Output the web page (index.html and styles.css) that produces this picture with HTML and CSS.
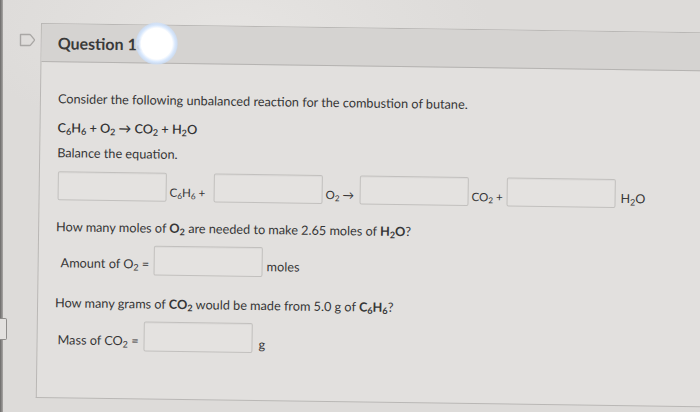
FILE: index.html
```html
<!DOCTYPE html>
<html lang="en">
<head>
<meta charset="utf-8">
<title>Question 18</title>
<link rel="stylesheet" href="styles.css">
</head>
<body>
<div class="page">
  <div class="edge"><div class="tab"></div></div>
  <div class="gutter">
    <svg class="flag" width="17" height="14" viewBox="0 0 17 14" aria-hidden="true">
      <path d="M1.5 1.5 H10.5 Q11.2 1.5 11.7 2.1 L15.2 6.4 Q15.6 7 15.2 7.6 L11.7 11.9 Q11.2 12.5 10.5 12.5 H1.5 Z" fill="none" stroke="#a9a7a5" stroke-width="1.4" stroke-linejoin="round"/>
    </svg>
  </div>
  <div class="card">
    <div class="card-head">
      <h2 class="title">Question 18</h2>
      <div class="glare"></div>
    </div>
    <div class="card-body">
      <p class="line l1">Consider the following unbalanced reaction for the combustion of butane.</p>
      <p class="line eq">C<sub>6</sub>H<sub>6</sub> + O<sub>2</sub> → CO<sub>2</sub> + H<sub>2</sub>O</p>
      <p class="line l3">Balance the equation.</p>
      <div class="eq-row">
        <div class="box"></div>
        <span class="term t1">C<sub>6</sub>H<sub>6</sub> +</span>
        <div class="box"></div>
        <span class="term t2">O<sub>2</sub> →</span>
        <div class="box"></div>
        <span class="term t3">CO<sub>2</sub> +</span>
        <div class="box"></div>
        <span class="term t4">H<sub>2</sub>O</span>
      </div>
      <p class="line q1">How many moles of <b>O<sub>2</sub></b> are needed to make 2.65 moles of <b>H<sub>2</sub>O</b>?</p>
      <div class="ans-row a1">
        <span class="ans-label">Amount of O<sub>2</sub> =</span>
        <div class="box box-ans"></div>
        <span class="unit">moles</span>
      </div>
      <p class="line q2">How many grams of <b>CO<sub>2</sub></b> would be made from 5.0 g of <b>C<sub>6</sub>H<sub>6</sub></b>?</p>
      <div class="ans-row a2">
        <span class="ans-label">Mass of CO<sub>2</sub> =</span>
        <div class="box box-ans"></div>
        <span class="unit unit-g">g</span>
      </div>
    </div>
  </div>
</div>
</body>
</html>
```

FILE: styles.css
```css
* { box-sizing: border-box; }
html, body { margin: 0; padding: 0; }
body {
  width: 700px;
  height: 412px;
  overflow: hidden;
  font-family: Lato, "Open Sans", "Liberation Sans", sans-serif;
  color: #363636;
  background: radial-gradient(ellipse 260px 120px at 230px 30px, #e6e4e2 0%, #dddbd9 100%), #dddbd9;
}
.page {
  display: flex;
  height: 412px;
}
.edge {
  position: relative;
  flex: none;
  width: 3px;
  background: linear-gradient(to right, #6a6968, #a9a7a5);
}
.tab {
  position: absolute;
  left: 0;
  top: 318px;
  width: 7px;
  height: 22px;
  border: 1.5px solid #8f8d8b;
  border-left: none;
  border-radius: 0 2px 2px 0;
  background: #e3e1df;
}
.gutter {
  flex: none;
  width: 38px;
  padding: 33px 0 0 16px;
}
.flag { display: block; }
.card {
  flex: none;
  width: 720px;
  height: 375px;
  margin-top: 23px;
  transform: rotate(0.8deg);
  transform-origin: 0 0;
  border: 1px solid #b9b7b5;
  border-right: none;
  background: #e2e0de;
}
.card-head {
  position: relative;
  height: 38px;
  display: flex;
  align-items: center;
  padding-left: 16px;
  background: #d5d3d1;
  border-bottom: 1px solid #b5b3b1;
}
.title {
  margin: 0;
  font-size: 16px;
  font-weight: 700;
  color: #3a3a3a;
}
.glare {
  position: absolute;
  left: 94px;
  top: -3px;
  width: 42px;
  height: 42px;
  border-radius: 50%;
  background: radial-gradient(circle, #ffffff 0%, #ffffff 52%, rgba(215, 232, 255, 0.95) 62%, rgba(185, 210, 245, 0.55) 76%, rgba(205, 218, 235, 0.15) 90%, rgba(220, 225, 235, 0) 100%);
}
.card-body {
  padding: 26px 0 0 17px;
}
.line {
  margin: 0;
  font-size: 12.7px;
  line-height: 20px;
}
.eq { margin-top: 9px; font-weight: 600; color: #333333; }
.l3 { margin-top: 5px; }
.line b { font-weight: 700; }
sub {
  font-size: 0.72em;
  line-height: 0;
  vertical-align: -0.25em;
}
.eq-row {
  display: flex;
  align-items: center;
  margin-top: 9px;
  padding-left: 1px;
}
.box {
  flex: none;
  width: 109px;
  height: 29px;
  border: 1px solid #c2c0be;
  border-radius: 2px;
  background: #e4e2e0;
  box-shadow: inset 0 1px 1px rgba(0, 0, 0, 0.04);
}
.box-ans { height: 30px; }
.term {
  flex: none;
  font-size: 11.5px;
  line-height: 14px;
  padding: 10px 0 0 3px;
  white-space: nowrap;
}
.t1 { width: 47px; }
.t2 { width: 37px; }
.t3 { width: 38px; }
.t4 { font-size: 12.5px; padding-left: 5px; }
.q1 { margin-top: 16px; }
.ans-row {
  display: flex;
  align-items: center;
  font-size: 12.7px;
  line-height: 18px;
}
.a1 { margin-top: 8px; padding-left: 5px; }
.a2 { margin-top: 8px; padding-left: 3px; }
.ans-label { padding: 6px 4px 0 0; white-space: nowrap; }
.a1 .ans-label { width: 93px; }
.a2 .ans-label { width: 86px; }
.a2 .ans-label { padding-top: 7px; }
.unit { padding: 8px 0 0 4px; }
.unit-g { padding: 11px 0 0 6px; }
.q2 { margin-top: 18px; }
```
